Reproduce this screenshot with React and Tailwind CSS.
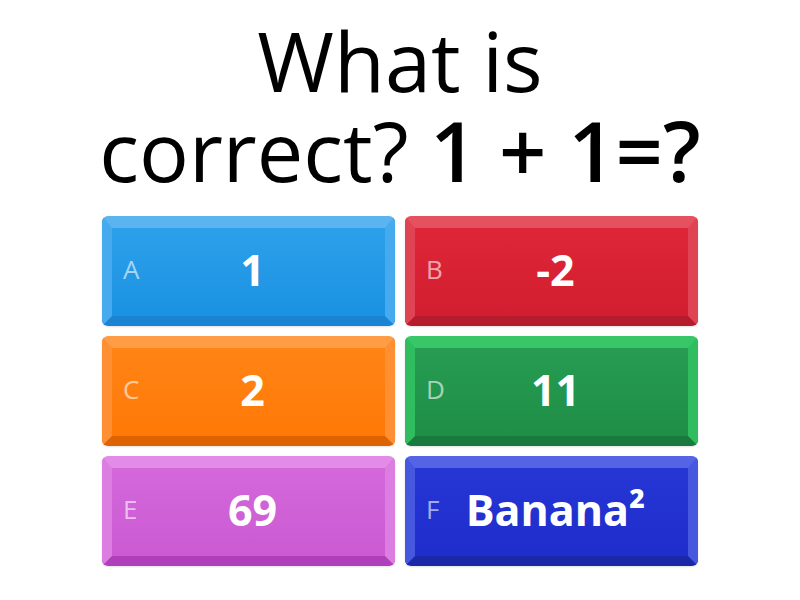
import React from "react";

const cards = [
  { l: "A", v: "1", cls: "border-t-[#5BB3F0] border-x-[#47AAEE] border-b-[#1B84D2] bg-gradient-to-b from-[#2CA0EA] to-[#1A92E2]" },
  { l: "B", v: "-2", cls: "border-t-[#E4525F] border-x-[#E04353] border-b-[#B71C2D] bg-gradient-to-b from-[#DE2638] to-[#D21E30]" },
  { l: "C", v: "2", cls: "border-t-[#FF9D47] border-x-[#FF8F33] border-b-[#DC6300] bg-gradient-to-b from-[#FF8414] to-[#FF7906]" },
  { l: "D", v: "11", cls: "border-t-[#37C769] border-x-[#2FBD5F] border-b-[#1A793C] bg-gradient-to-b from-[#279C52] to-[#1F8E47]" },
  { l: "E", v: "69", cls: "border-t-[#E28CE7] border-x-[#DB7DE1] border-b-[#AF3FBB] bg-gradient-to-b from-[#D468DB] to-[#CB5AD3]" },
  { l: "F", v: "Banana²", cls: "border-t-[#5464E5] border-x-[#4757E0] border-b-[#1B28A7] bg-gradient-to-b from-[#2636D5] to-[#1E2DCB]" },
];

export default function App() {
  return (
    <div className="w-[800px] h-[600px] bg-white flex flex-col items-center font-['Open_Sans',sans-serif]">
      <div className="w-[640px] mt-[15px] text-center text-black text-[83px] leading-[90px] whitespace-nowrap">
        What is
        <br />
        correct? <span className="font-semibold">1 + 1=?</span>
      </div>
      <div className="w-[596px] mt-[21px] grid grid-cols-2 gap-[10px]">
        {cards.map((c) => (
          <div
            key={c.l}
            className={`h-[110px] rounded-[6px] border-solid border-t-[12px] border-x-[10px] border-b-[10px] flex items-center pb-[6px] shadow-[0_1px_2px_rgba(0,0,0,0.12)] ${c.cls}`}
          >
            <div className="w-[36px] pl-[11px] text-[26px] text-white/60 leading-none">{c.l}</div>
            <div className="flex-1 text-center text-white font-bold text-[43px] leading-none">{c.v}</div>
            <div className="w-[28px]"></div>
          </div>
        ))}
      </div>
    </div>
  );
}
